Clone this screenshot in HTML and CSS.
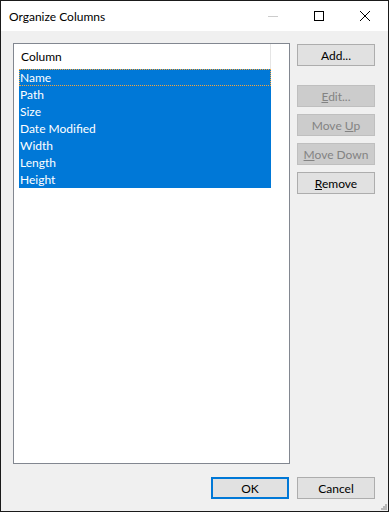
FILE: index.html
```html
<!DOCTYPE html>
<html lang="en">
<head>
  <meta charset="UTF-8">
  <title>Organize Columns</title>
  <link rel="stylesheet" href="styles.css">
</head>
<body>
  <div class="window">
    <div class="titlebar">
      <span class="title">Organize Columns</span>
      <div class="caption">
        <span class="cap-btn">
          <svg width="10" height="10" viewBox="0 0 10 10"><path d="M0 5.5H10" stroke="#cccccc" stroke-width="1"/></svg>
        </span>
        <span class="cap-btn">
          <svg width="10" height="10" viewBox="0 0 10 10"><rect x="0.5" y="0.5" width="9" height="9" fill="none" stroke="#000" stroke-width="1"/></svg>
        </span>
        <span class="cap-btn">
          <svg width="10" height="10" viewBox="0 0 10 10"><path d="M0 0L10 10M10 0L0 10" stroke="#000" stroke-width="1"/></svg>
        </span>
      </div>
    </div>

    <div class="content">
      <div class="main">
        <div class="listbox">
          <div class="list-header">
            <span class="col-title">Column</span>
          </div>
          <div class="rows">
            <div class="row focused">Name</div>
            <div class="row">Path</div>
            <div class="row">Size</div>
            <div class="row">Date Modified</div>
            <div class="row">Width</div>
            <div class="row">Length</div>
            <div class="row">Height</div>
          </div>
        </div>

        <div class="side">
          <button class="btn">Add...</button>
          <button class="btn gap-top" disabled><u>E</u>dit...</button>
          <button class="btn" disabled>Move <u>U</u>p</button>
          <button class="btn" disabled><u>M</u>ove Down</button>
          <button class="btn"><u>R</u>emove</button>
        </div>
      </div>

      <div class="footer">
        <button class="btn default">OK</button>
        <button class="btn">Cancel</button>
      </div>
    </div>

    <svg class="grip" width="6" height="6" viewBox="0 0 6 6">
      <rect x="4" y="0" width="2" height="2" fill="#b8b8b8"/>
      <rect x="2" y="2" width="2" height="2" fill="#b8b8b8"/>
      <rect x="4" y="2" width="2" height="2" fill="#b8b8b8"/>
      <rect x="0" y="4" width="2" height="2" fill="#b8b8b8"/>
      <rect x="2" y="4" width="2" height="2" fill="#b8b8b8"/>
      <rect x="4" y="4" width="2" height="2" fill="#b8b8b8"/>
    </svg>
  </div>
</body>
</html>
```

FILE: styles.css
```css
body {
  margin: 0;
  font-family: Lato, 'Noto Sans', sans-serif;
  font-size: 12px;
  color: #000;
}

.window {
  position: relative;
  width: 389px;
  height: 512px;
  box-sizing: border-box;
  border: 1px solid #1a1a1a;
  background-color: #f0f0f0;
  display: flex;
  flex-direction: column;
}

.titlebar {
  height: 30px;
  background-color: #fff;
  display: flex;
  align-items: center;
  justify-content: space-between;
}

.title {
  padding-left: 8px;
}

.caption {
  display: flex;
  height: 100%;
}

.cap-btn {
  width: 46px;
  display: flex;
  align-items: center;
  justify-content: center;
}

.content {
  flex: 1;
  display: flex;
  flex-direction: column;
  padding: 12px 12px 12px 12px;
}

.main {
  display: flex;
  gap: 7px;
}

.listbox {
  width: 277px;
  height: 421px;
  box-sizing: border-box;
  border: 1px solid #828790;
  background-color: #fff;
}

.list-header {
  height: 25px;
  display: flex;
  align-items: center;
  position: relative;
}

.list-header::after {
  content: "";
  position: absolute;
  left: 256px;
  top: 0;
  bottom: 0;
  width: 1px;
  background-color: #e5e5e5;
}

.col-title {
  padding-left: 7px;
}

.rows {
  padding-left: 5px;
}

.row {
  width: 252px;
  height: 17px;
  box-sizing: border-box;
  line-height: 17px;
  padding-left: 1px;
  background-color: #0078d7;
  color: #fff;
}

.row.focused {
  border: 1px dotted #f7a53a;
  line-height: 15px;
  padding-left: 0;
}

.side {
  display: flex;
  flex-direction: column;
  gap: 7px;
  padding-top: 1px;
}

.btn {
  width: 78px;
  height: 22px;
  padding: 0;
  font-family: inherit;
  font-size: 12px;
  color: #000;
  background-color: #e1e1e1;
  border: 1px solid #adadad;
  box-sizing: border-box;
}

.btn u {
  text-decoration-thickness: 1px;
}

.btn:disabled {
  background-color: #cccccc;
  border-color: #bfbfbf;
  color: #838383;
}

.gap-top {
  margin-top: 12px;
}

.footer {
  margin-top: 13px;
  display: flex;
  justify-content: flex-end;
  gap: 8px;
  padding-right: 1px;
}

.btn.default {
  border: 2px solid #0078d7;
}

.grip {
  position: absolute;
  right: 1px;
  bottom: 1px;
}
```
